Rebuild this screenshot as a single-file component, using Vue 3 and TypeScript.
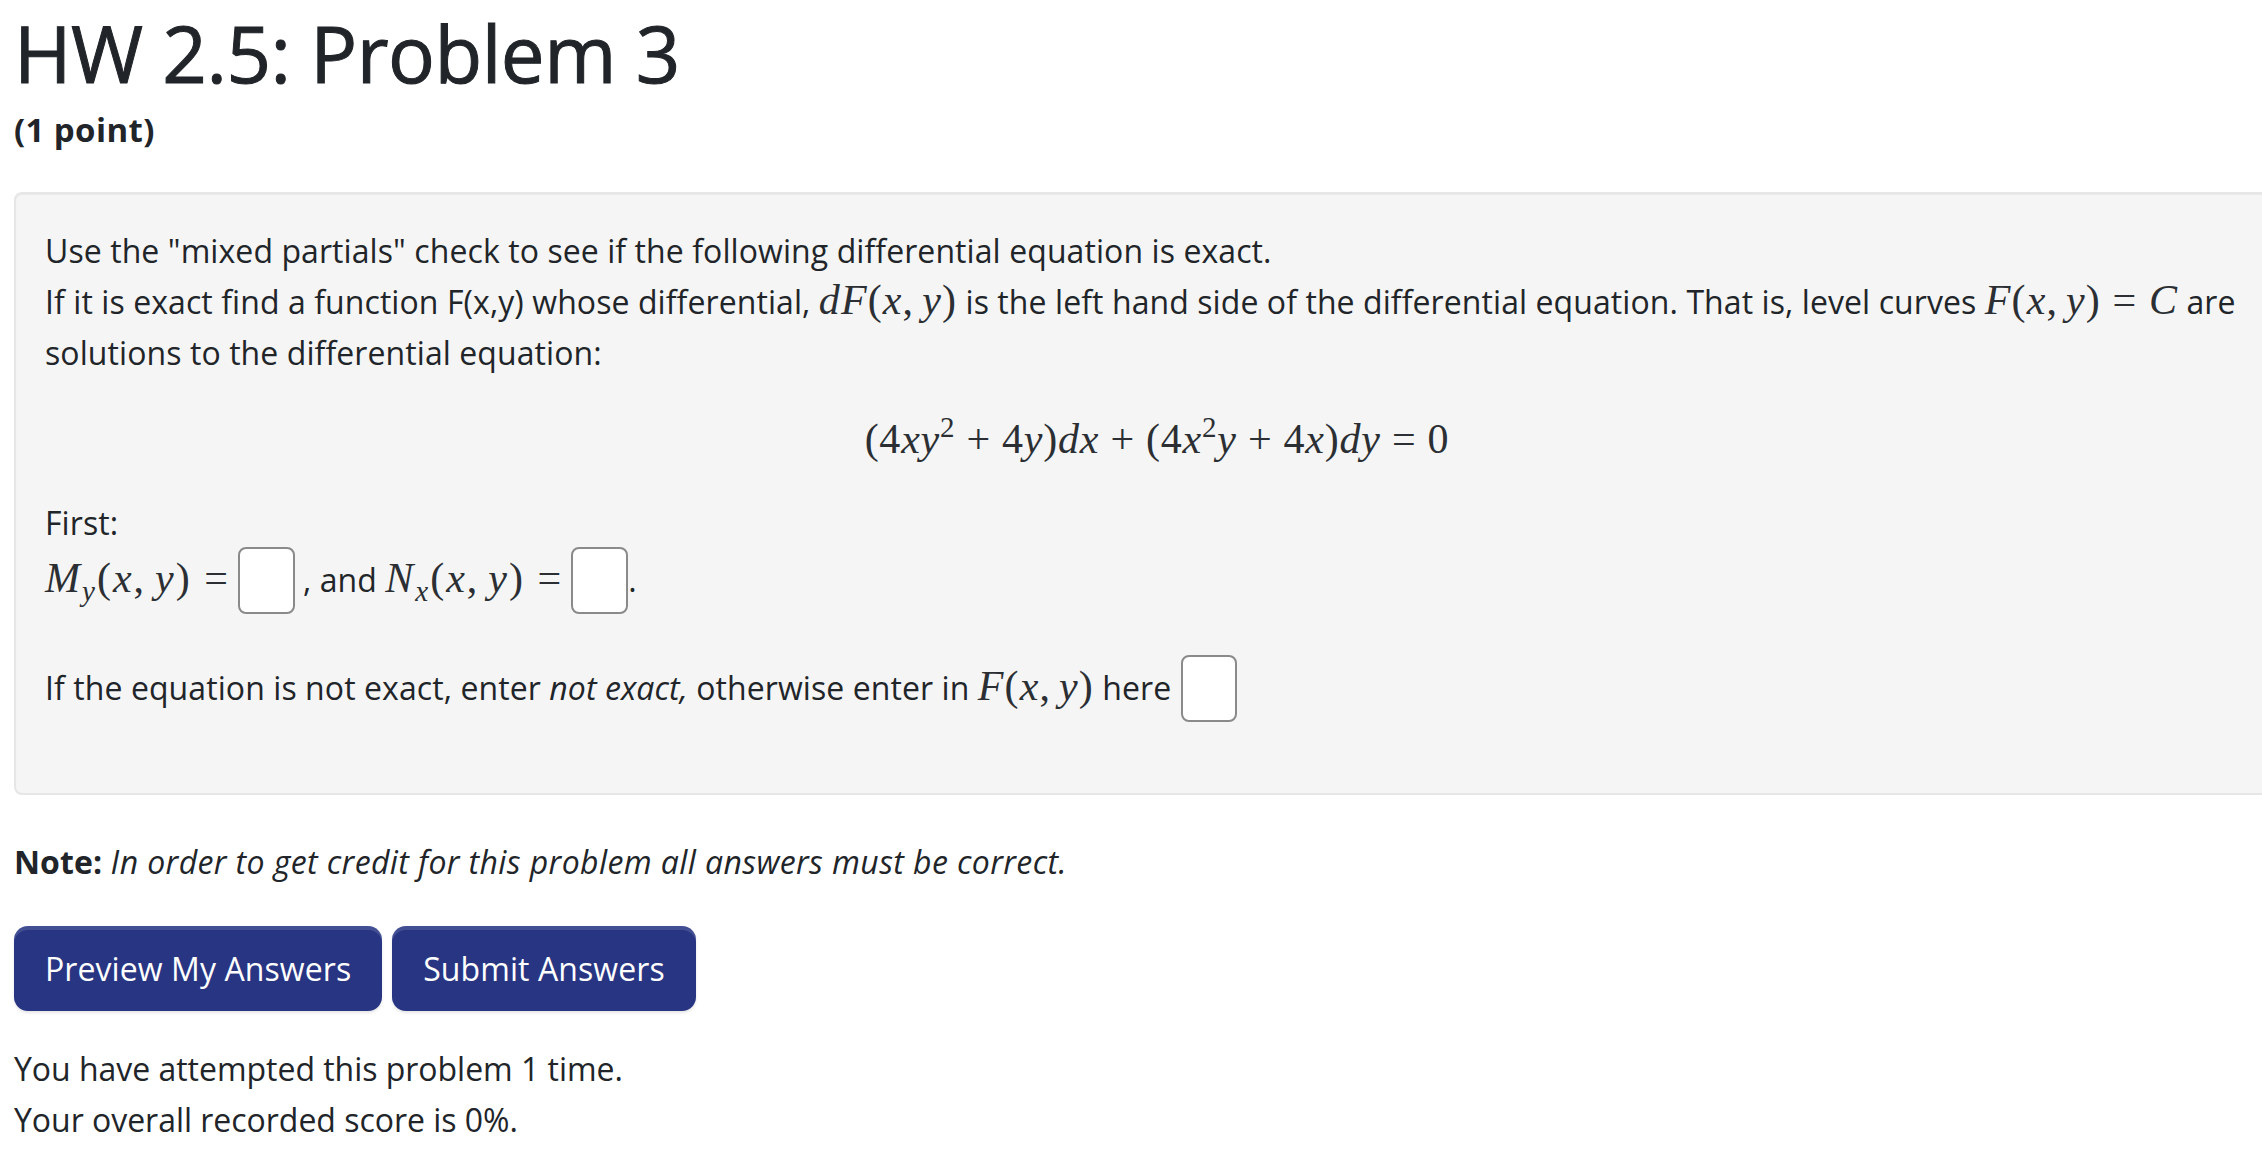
<script setup lang="ts">
const title: string = 'HW 2.5: Problem 3'
</script>

<template>
  <main class="page">
    <h1 class="title">{{ title }}</h1>
    <div class="points">(1 point)</div>
    <section class="panel">
      <p class="para">
        Use the "mixed partials" check to see if the following differential equation is exact.<br />
        If it is exact find a function F(x,y) whose differential, <span class="m"><i>dF</i>(<i>x</i>,&#8198;<i>y</i>)</span> is the left hand side of the differential equation. That is, level curves <span class="m"><i>F</i>(<i>x</i>,&#8198;<i>y</i>)&#8197;=&#8197;<i>C</i></span> are<br />
        solutions to the differential equation:
      </p>
      <div class="display m">(4<i>xy</i><sup>2</sup>&#8197;+&#8197;4<i>y</i>)<i>dx</i>&#8197;+&#8197;(4<i>x</i><sup>2</sup><i>y</i>&#8197;+&#8197;4<i>x</i>)<i>dy</i>&#8197;=&#8197;0</div>
      <p class="first">First:</p>
      <p class="answers">
        <span class="m"><i>M</i><sub><i>y</i></sub>(<i>x</i>,&#8198;<i>y</i>)&#8197;=</span><span class="box"></span><span class="after">, and</span> <span class="m"><i>N</i><sub><i>x</i></sub>(<i>x</i>,&#8198;<i>y</i>)&#8197;=</span><span class="box"></span>.
      </p>
      <p class="exact">
        If the equation is not exact, enter <em>not exact,</em> otherwise enter in <span class="m"><i>F</i>(<i>x</i>,&#8198;<i>y</i>)</span> here <span class="box"></span>
      </p>
    </section>
    <p class="note"><strong>Note:</strong> <em>In order to get credit for this problem all answers must be correct.</em></p>
    <div class="actions">
      <button class="btn preview" type="button">Preview My Answers</button>
      <button class="btn" type="button">Submit Answers</button>
    </div>
    <p class="status">You have attempted this problem 1 time.<br />Your overall recorded score is 0%.</p>
  </main>
</template>

<style>
html, body { margin: 0; background: #fff; overflow: hidden; }
</style>

<style scoped>
.page {
  width: 2262px;
  height: 1152px;
  overflow: hidden;
  padding-left: 14px;
  box-sizing: border-box;
  color: #212529;
  font-family: "Open Sans", "Noto Sans", sans-serif;
  font-size: 32px;
  line-height: 51px;
  letter-spacing: 0.08px;
}
p { margin: 0; }
.title {
  margin: 0;
  padding-top: 7px;
  font-size: 78px;
  line-height: 92px;
  font-weight: 400;
  letter-spacing: -0.5px;
  -webkit-text-stroke: 1px #212529;
}
.points {
  margin-top: 5px;
  font-size: 33px;
  letter-spacing: 0.4px;
  font-weight: 700;
  line-height: 51px;
}
.panel {
  width: 2286px;
  margin-top: 37px;
  height: 603px;
  box-sizing: border-box;
  padding: 31px 29px 0;
  background: #f5f5f5;
  border: 2px solid #e6e6e6;
  border-radius: 8px;
  box-shadow: inset 0 1px 1px rgba(0, 0, 0, 0.05);
}
.m {
  font-family: "Liberation Serif", "Times New Roman", serif;
  font-size: 42px;
  line-height: 0;
  letter-spacing: 1.1px;
  color: #2b2f33;
}
sup, sub { font-size: 29px; line-height: 0; }
sup { vertical-align: 16px; }
sub { vertical-align: -9px; }
.display {
  margin-top: 36px;
  text-align: center;
  line-height: 51px;
  letter-spacing: 0.75px;
}
.first { margin-top: 32px; }
.answers { margin-top: -1px; line-height: 57px; }
.answers .m { letter-spacing: 2px; }
.box {
  display: inline-block;
  width: 57px;
  height: 67px;
  box-sizing: border-box;
  margin-left: 8px;
  vertical-align: -22px;
  background: #fff;
  border: 2px solid #8a8a8a;
  border-radius: 8px;
}
.after { margin-left: 8px; }
.exact { margin-top: 41px; }
.exact .box { width: 56px; margin-left: 1px; }
.note { margin-top: 41px; }
.note em { letter-spacing: 0.4px; }
.actions {
  display: flex;
  gap: 10px;
  margin-top: 39px;
}
.btn {
  height: 85px;
  padding: 0 31px;
  color: #fff;
  font: inherit;
  letter-spacing: inherit;
  background: #283583;
  border: 0;
  border-radius: 14px;
  box-shadow: inset 0 4px 0 rgba(255, 255, 255, 0.13), 0 2px 3px rgba(0, 0, 0, 0.1);
}
.status { margin-top: 32px; letter-spacing: -0.03px; }
</style>
